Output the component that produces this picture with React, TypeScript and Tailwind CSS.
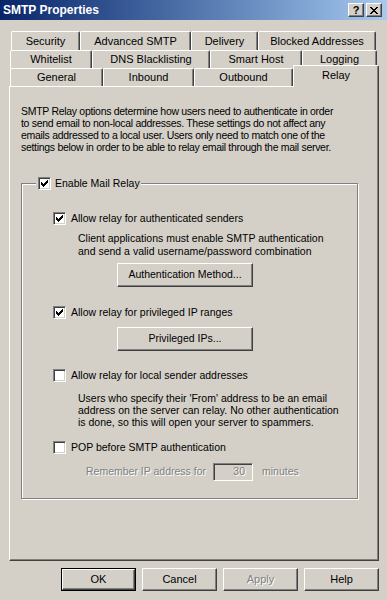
import React from "react";

type Tab = { label: string; cls: string };

const row1: Tab[] = [
  { label: "Security", cls: "w-[69px]" },
  { label: "Advanced SMTP", cls: "w-[111px]" },
  { label: "Delivery", cls: "w-[67px]" },
  { label: "Blocked Addresses", cls: "w-[118px]" },
];

const row2: Tab[] = [
  { label: "Whitelist", cls: "w-[82px]" },
  { label: "DNS Blacklisting", cls: "w-[118px]" },
  { label: "Smart Host", cls: "w-[92px]" },
  { label: "Logging", cls: "w-[75px]" },
];

const row3: Tab[] = [
  { label: "General", cls: "w-[93px]" },
  { label: "Inbound", cls: "w-[91px]" },
  { label: "Outbound", cls: "w-[99px]" },
];

const disabledText = "text-[#808080] [text-shadow:1px_1px_0_#fff]";

function TabItem({ label, cls }: Tab) {
  return (
    <div
      className={`${cls} h-full flex items-center justify-center border-t border-l border-white border-r border-r-[#404040] rounded-t-[2px] shadow-[inset_-1px_0_0_#808080] bg-[#d4d0c8]`}
    >
      {label}
    </div>
  );
}

function CheckMark() {
  // classic 7x7 bitmap tick
  return (
    <svg width="7" height="7" viewBox="0 0 7 7" shapeRendering="crispEdges">
      <rect x="0" y="2" width="1" height="3" fill="#000" />
      <rect x="1" y="3" width="1" height="3" fill="#000" />
      <rect x="2" y="4" width="1" height="3" fill="#000" />
      <rect x="3" y="3" width="1" height="3" fill="#000" />
      <rect x="4" y="2" width="1" height="3" fill="#000" />
      <rect x="5" y="1" width="1" height="3" fill="#000" />
      <rect x="6" y="0" width="1" height="3" fill="#000" />
    </svg>
  );
}

function Checkbox({ checked }: { checked?: boolean }) {
  return (
    <span className="w-[13px] h-[13px] shrink-0 flex items-center justify-center bg-white border border-t-[#808080] border-l-[#808080] border-r-white border-b-white shadow-[inset_1px_1px_0_#404040,inset_-1px_-1px_0_#d4d0c8]">
      {checked && <CheckMark />}
    </span>
  );
}

function CheckRow({ checked, label, cls }: { checked?: boolean; label: string; cls: string }) {
  return (
    <div className={`${cls} flex items-center gap-[5px] h-[13px]`}>
      <Checkbox checked={checked} />
      <span className="leading-[13px]">{label}</span>
    </div>
  );
}

function Button({
  children,
  cls,
  disabled,
  isDefault,
}: {
  children: React.ReactNode;
  cls: string;
  disabled?: boolean;
  isDefault?: boolean;
}) {
  const inner = (
    <span
      className={`w-full h-full flex items-center justify-center bg-[#d4d0c8] border border-t-white border-l-white border-r-[#404040] border-b-[#404040] shadow-[inset_-1px_-1px_0_#808080] ${disabled ? disabledText : ""}`}
    >
      {children}
    </span>
  );
  if (isDefault) {
    return (
      <button type="button" className={`${cls} border border-black flex`}>
        {inner}
      </button>
    );
  }
  return (
    <button type="button" className={`${cls} flex`}>
      {inner}
    </button>
  );
}

function TitleButton({ children }: { children: React.ReactNode }) {
  return (
    <span className="w-[16px] h-[14px] flex items-center justify-center bg-[#d4d0c8] border border-t-white border-l-white border-r-[#404040] border-b-[#404040] shadow-[inset_-1px_-1px_0_#808080] text-black font-bold text-[11px] leading-none">
      {children}
    </span>
  );
}

function CloseGlyph() {
  return (
    <svg width="8" height="7" viewBox="0 0 8 7" shapeRendering="crispEdges">
      <path
        d="M0 0h2v1H0zM6 0h2v1H6zM1 1h2v1H1zM5 1h2v1H5zM2 2h4v1H2zM3 3h2v1H3zM2 4h4v1H2zM1 5h2v1H1zM5 5h2v1H5zM0 6h2v1H0zM6 6h2v1H6z"
        fill="#000"
      />
    </svg>
  );
}

export default function App() {
  return (
    <div className="w-[387px] h-[600px] bg-[#d4d0c8] text-black text-[11px] [font-family:'Liberation_Sans',Arial,sans-serif] flex flex-col overflow-hidden">
      {/* Title bar */}
      <div className="h-[20px] shrink-0 flex items-center pl-[3px] pr-[5px] bg-linear-to-r from-[#0a246a] to-[#a6caf0]">
        <span className="text-white font-bold text-[12px] leading-none">SMTP Properties</span>
        <div className="ml-auto flex gap-[2px]">
          <TitleButton>?</TitleButton>
          <TitleButton>
            <CloseGlyph />
          </TitleButton>
        </div>
      </div>

      <div className="pl-[9px] pr-[8px] mt-[11px]">
        {/* Tab rows */}
        <div className="flex h-[19px] pl-[2px]">
          {row1.map((t) => (
            <TabItem key={t.label} {...t} />
          ))}
        </div>
        <div className="flex h-[18px] pl-[1px]">
          {row2.map((t) => (
            <TabItem key={t.label} {...t} />
          ))}
        </div>
        <div className="flex items-start h-[18px] pl-[1px]">
          {row3.map((t) => (
            <TabItem key={t.label} {...t} />
          ))}
          <div className="relative z-10 w-[86px] h-[22px] -mt-[3px] flex justify-center pt-[1px] bg-[#d4d0c8] border-t border-l border-white border-r border-r-[#404040] rounded-t-[2px] shadow-[inset_-1px_0_0_#808080]">
            Relay
          </div>
        </div>

        {/* Tab page */}
        <div className="h-[475px] pl-[11px] text-[10.5px] border-t border-l border-white border-r border-b border-r-[#404040] border-b-[#404040] shadow-[inset_-1px_-1px_0_#808080]">
          <p className="mt-[18px] leading-[12px] tracking-[-0.3px] whitespace-nowrap">
            SMTP Relay options determine how users need to authenticate in order
            <br />
            to send email to non-local addresses. These settings do not affect any
            <br />
            emails addressed to a local user. Users only need to match one of the
            <br />
            settings below in order to be able to relay email through the mail server.
          </p>

          <fieldset className="mt-[24px] w-[337px] border border-[#808080] shadow-[inset_1px_1px_0_#fff,1px_1px_0_#fff] pb-[17px]">
            <legend className="ml-[14px] pl-[2px] pr-[1px] bg-[#d4d0c8]">
              <span className="flex items-center gap-[4px] h-[13px]">
                <Checkbox checked />
                <span className="leading-[13px]">Enable Mail Relay</span>
              </span>
            </legend>

            <CheckRow checked label="Allow relay for authenticated senders" cls="ml-[31px] mt-[22px]" />
            <p className="ml-[56px] mt-[7px] leading-[13px] whitespace-nowrap">
              Client applications must enable SMTP authentication
              <br />
              and send a valid username/password combination
            </p>
            <Button cls="ml-[95px] mt-[5px] w-[136px] h-[24px]">Authentication Method...</Button>

            <CheckRow checked label="Allow relay for privileged IP ranges" cls="ml-[31px] mt-[19px]" />
            <Button cls="ml-[95px] mt-[8px] w-[136px] h-[24px]">Privileged IPs...</Button>

            <CheckRow label="Allow relay for local sender addresses" cls="ml-[31px] mt-[18px]" />
            <p className="ml-[56px] mt-[10px] leading-[12px] whitespace-nowrap">
              Users who specify their 'From' address to be an email
              <br />
              address on the server can relay. No other authentication
              <br />
              is done, so this will open your server to spammers.
            </p>

            <CheckRow label="POP before SMTP authentication" cls="ml-[31px] mt-[13px]" />
            <div className="ml-[64px] mt-[9px] flex items-center h-[18px]">
              <span className={`w-[127px] ${disabledText}`}>Remember IP address for</span>
              <span
                className={`w-[40px] h-[18px] flex items-center justify-end pr-[7px] bg-[#d4d0c8] border border-t-[#808080] border-l-[#808080] border-r-white border-b-white shadow-[inset_1px_1px_0_#404040,inset_-1px_-1px_0_#d4d0c8] ${disabledText}`}
              >
                30
              </span>
              <span className={`ml-[9px] ${disabledText}`}>minutes</span>
            </div>
          </fieldset>
        </div>

        {/* Dialog buttons */}
        <div className="mt-[7px] flex justify-end gap-[6px]">
          <Button isDefault cls="w-[75px] h-[23px]">
            OK
          </Button>
          <Button cls="w-[75px] h-[23px]">Cancel</Button>
          <Button disabled cls="w-[75px] h-[23px]">
            Apply
          </Button>
          <Button cls="w-[75px] h-[23px]">Help</Button>
        </div>
      </div>
    </div>
  );
}
